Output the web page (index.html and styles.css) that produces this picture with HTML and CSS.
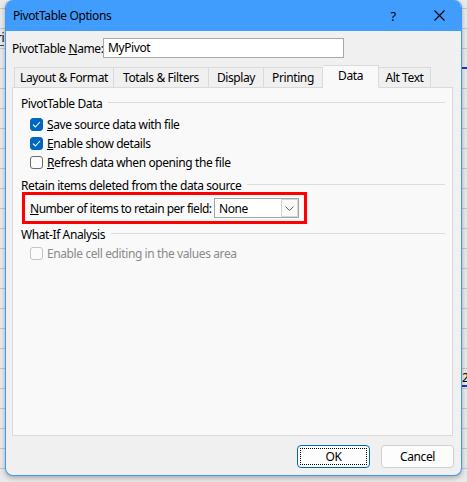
FILE: index.html
```html
<!DOCTYPE html>
<html>
<head>
<meta charset="utf-8">
<link rel="stylesheet" href="styles.css">
</head>
<body>
<div class="desk">
  <span class="cell-l">ri</span>
  <span class="mark-r top"></span>
  <span class="cell-r">2</span>
  <div class="dialog">
    <div class="titlebar">
      <span class="title">PivotTable Options</span>
      <span class="tb-btn help">?</span>
      <span class="tb-btn close">
        <svg width="11" height="11" viewBox="0 0 11 11"><path d="M0.5 0.5 L10.5 10.5 M10.5 0.5 L0.5 10.5" stroke="#000" stroke-width="1.1" fill="none"/></svg>
      </span>
    </div>
    <div class="body">
      <div class="namerow">
        <span class="namelabel">PivotTable <u>N</u>ame:</span>
        <div class="input">MyPivot</div>
      </div>
      <div class="tabs">
        <div class="tab w1">Layout &amp; Format</div>
        <div class="tab w2">Totals &amp; Filters</div>
        <div class="tab w3">Display</div>
        <div class="tab w4">Printing</div>
        <div class="tab w5 active">Data</div>
        <div class="tab w6">Alt Text</div>
      </div>
      <div class="panel">
        <div class="sect s1"><span>PivotTable Data</span><div class="rule"></div></div>
        <div class="row first"><span class="cb on"><svg width="9" height="7" viewBox="0 0 9 7"><path d="M1 3.6 L3.4 6 L8 1" stroke="#fff" stroke-width="1.1" fill="none"/></svg></span><span><u>S</u>ave source data with file</span></div>
        <div class="row"><span class="cb on"><svg width="9" height="7" viewBox="0 0 9 7"><path d="M1 3.6 L3.4 6 L8 1" stroke="#fff" stroke-width="1.1" fill="none"/></svg></span><span><u>E</u>nable show details</span></div>
        <div class="row"><span class="cb"></span><span><u>R</u>efresh data when opening the file</span></div>
        <div class="sect s2"><span>Retain items deleted from the data source</span><div class="rule"></div></div>
        <div class="redbox">
          <span class="rlabel"><u>N</u>umber of items to retain per field:</span>
          <div class="select"><span class="val">None</span><span class="arrow"><svg width="9" height="5" viewBox="0 0 9 5"><path d="M0.5 0.5 L4.5 4.5 L8.5 0.5" stroke="#606060" stroke-width="1" fill="none"/></svg></span></div>
        </div>
        <div class="sect s3"><span>What-If Analysis</span><div class="rule"></div></div>
        <div class="row disabled"><span class="cb dis"></span><span>Enable cell editing in the values area</span></div>
      </div>
      <div class="buttons">
        <div class="btn ok"><span class="focus">OK</span></div>
        <div class="btn">Cancel</div>
      </div>
    </div>
  </div>
</div>
</body>
</html>
```
FILE: styles.css
```css
html, body {
  margin: 0;
  padding: 0;
}
body {
  width: 467px;
  height: 482px;
  overflow: hidden;
  background-color: #e9e9e9;
  background-image: repeating-linear-gradient(to bottom, transparent 0, transparent 8px, #c4c4c4 8px, #c4c4c4 9px, transparent 9px, transparent 20px);
  font-family: "Noto Sans", "Segoe UI", sans-serif;
  font-size: 12px;
  letter-spacing: -0.4px;
  white-space: nowrap;
  color: #000;
}
.desk {
  position: relative;
  height: 482px;
  padding-left: 5px;
  box-sizing: border-box;
}
.cell-l {
  position: absolute;
  left: -3px;
  top: 31px;
  font-size: 12px;
  line-height: 14px;
  border-bottom: 1px solid #444;
}
.cell-r {
  position: absolute;
  left: 462px;
  top: 371px;
  font-size: 12px;
  line-height: 14px;
  width: 5px;
  overflow: hidden;
  border-bottom: 2px solid #1d34c9;
}
.mark-r {
  position: absolute;
  left: 462px;
  top: 67px;
  width: 6px;
  height: 2px;
  background: #1d34c9;
}
.dialog {
  position: relative;
  width: 457px;
  height: 476px;
  box-sizing: border-box;
  border: 1px solid #3f97f7;
  border-top: none;
  border-radius: 8px;
  background: #f0f0f0;
  display: flex;
  flex-direction: column;
  overflow: hidden;
  box-shadow: 0 2px 5px rgba(0,0,0,0.28);
}
.titlebar {
  height: 31px;
  flex: none;
  background: #409dfe;
  display: flex;
  align-items: center;
  margin: 0 -1px;
}
.title {
  flex: 1;
  padding-left: 8px;
  font-size: 12px;
}
.tb-btn {
  width: 46px;
  height: 31px;
  display: flex;
  align-items: center;
  justify-content: center;
}
.help {
  font-size: 13px;
}
.body {
  flex: 1;
  display: flex;
  flex-direction: column;
  padding: 0 8px 0 6px;
}
.namerow {
  display: flex;
  align-items: center;
  margin-top: 7px;
  height: 20px;
}
.namelabel {
  width: 91px;
}
.input {
  width: 241px;
  height: 20px;
  box-sizing: border-box;
  border: 1px solid #a9a9a9;
  background: #fff;
  padding-left: 4px;
  line-height: 18px;
}
.tabs {
  display: flex;
  align-items: flex-end;
  margin-top: 8px;
  margin-left: 2px;
  height: 22px;
  position: relative;
  z-index: 1;
  margin-bottom: -1px;
}
.tab {
  height: 21px;
  box-sizing: border-box;
  border: 1px solid #dadada;
  border-left: none;
  background: #f0f0f0;
  text-align: center;
  line-height: 20px;
}
.tab.w1 { width: 100px; border-left: 1px solid #dadada; }
.tab.w2 { width: 95px; }
.tab.w3 { width: 55px; }
.tab.w4 { width: 59px; }
.tab.w5 { width: 56px; }
.tab.w6 { width: 52px; }
.tab.active {
  height: 23px;
  background: #f9f9f9;
  border-bottom-color: #f9f9f9;
  line-height: 20px;
}
.panel {
  height: 349px;
  box-sizing: border-box;
  border: 1px solid #dadada;
  background: #f9f9f9;
  padding: 7px 7px 0 8px;
  display: flex;
  flex-direction: column;
}
.sect {
  display: flex;
  align-items: center;
}
.sect.s1 { height: 16px; }
.sect.s2 { height: 14px; margin-top: 6px; }
.sect.s3 { height: 14px; margin-top: 3px; }
.rule {
  flex: 1;
  height: 1px;
  background: #dcdcdc;
  margin-left: 6px;
  margin-top: -1px;
}
.row {
  display: flex;
  align-items: center;
  height: 19px;
  margin-left: 9px;
}
.row.first { margin-top: 4px; }
.row.disabled { margin-top: 3px; color: #8a8a8a; }
.cb {
  width: 13px;
  height: 13px;
  box-sizing: border-box;
  border: 1px solid #6b6b6b;
  border-radius: 3px;
  background: #fbfbfb;
  margin-right: 4px;
  display: flex;
  align-items: center;
  justify-content: center;
  flex: none;
}
.cb.on {
  background: #0067c0;
  border-color: #0067c0;
}
.cb.dis {
  border-color: #c4c4c4;
}
.redbox {
  width: 285px;
  height: 32px;
  box-sizing: border-box;
  border: 3px solid #ff0000;
  margin-left: 1px;
  padding: 0 5px 0 5px;
  display: flex;
  align-items: center;
}
.rlabel {
  flex: none;
  letter-spacing: -0.5px;
}
.select {
  margin-left: auto;
  width: 85px;
  flex: none;
  height: 20px;
  box-sizing: border-box;
  border: 1px solid #a5a5a5;
  background: #fff;
  display: flex;
  align-items: center;
}
.val {
  flex: 1;
  padding-left: 4px;
}
.arrow {
  width: 17px;
  height: 18px;
  box-sizing: border-box;
  border: 1px solid #d6d6d6;
  background: #fbfbfb;
  display: flex;
  align-items: center;
  justify-content: center;
}
.buttons {
  display: flex;
  justify-content: flex-end;
  gap: 11px;
  margin-top: 9px;
  margin-right: -1px;
}
.btn {
  width: 73px;
  height: 23px;
  box-sizing: border-box;
  border: 1px solid #d0d0d0;
  border-radius: 4px;
  background: #fdfdfd;
  display: flex;
  align-items: center;
  justify-content: center;
}
.btn.ok {
  border-color: #0067c0;
  padding: 2px;
}
.focus {
  width: 100%;
  height: 100%;
  box-sizing: border-box;
  border: 1px dotted #000;
  display: flex;
  align-items: center;
  justify-content: center;
}
```
